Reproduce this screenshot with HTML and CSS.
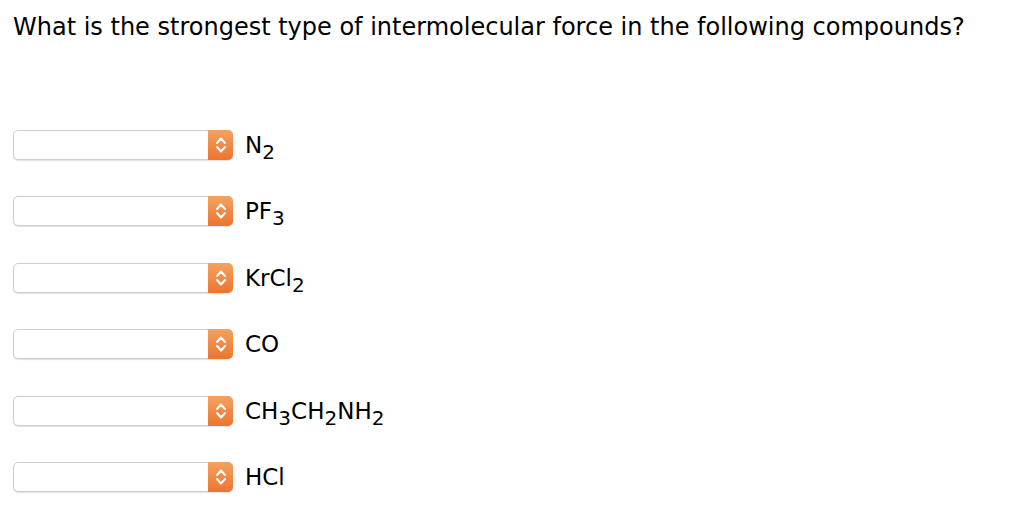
FILE: index.html
```html
<!DOCTYPE html>
<html lang="en">
<head>
    <meta charset="UTF-8">
    <title>Intermolecular Forces</title>
    <link rel="stylesheet" href="styles.css">
</head>
<body>
    <div class="question">
        <p class="prompt">What is the strongest type of intermolecular force in the following compounds?</p>

        <div class="answers">
            <div class="answer">
                <div class="dropdown"><span class="dropdown-btn"><svg viewBox="0 0 12 20"><path d="M2 8 6 3.5 10 8M2 12 6 16.5 10 12"/></svg></span></div>
                <span class="formula">N<sub>2</sub></span>
            </div>
            <div class="answer">
                <div class="dropdown"><span class="dropdown-btn"><svg viewBox="0 0 12 20"><path d="M2 8 6 3.5 10 8M2 12 6 16.5 10 12"/></svg></span></div>
                <span class="formula">PF<sub>3</sub></span>
            </div>
            <div class="answer">
                <div class="dropdown"><span class="dropdown-btn"><svg viewBox="0 0 12 20"><path d="M2 8 6 3.5 10 8M2 12 6 16.5 10 12"/></svg></span></div>
                <span class="formula">KrCl<sub>2</sub></span>
            </div>
            <div class="answer">
                <div class="dropdown"><span class="dropdown-btn"><svg viewBox="0 0 12 20"><path d="M2 8 6 3.5 10 8M2 12 6 16.5 10 12"/></svg></span></div>
                <span class="formula">CO</span>
            </div>
            <div class="answer">
                <div class="dropdown"><span class="dropdown-btn"><svg viewBox="0 0 12 20"><path d="M2 8 6 3.5 10 8M2 12 6 16.5 10 12"/></svg></span></div>
                <span class="formula">CH<sub>3</sub>CH<sub>2</sub>NH<sub>2</sub></span>
            </div>
            <div class="answer">
                <div class="dropdown"><span class="dropdown-btn"><svg viewBox="0 0 12 20"><path d="M2 8 6 3.5 10 8M2 12 6 16.5 10 12"/></svg></span></div>
                <span class="formula">HCl</span>
            </div>
        </div>
    </div>
</body>
</html>
```

FILE: styles.css
```css
body {
    margin: 0;
    background: #fff;
    font-family: "DejaVu Sans", Verdana, sans-serif;
    color: #000;
}
.question {
    padding: 12px 13px;
}
.prompt {
    margin: 0;
    font-size: 24px;
    line-height: 30px;
}
.answers {
    display: flex;
    flex-direction: column;
    gap: 36.4px;
    margin-top: 88px;
}
.answer {
    display: flex;
    align-items: center;
    gap: 12px;
    height: 30px;
}
.dropdown {
    display: flex;
    justify-content: flex-end;
    width: 218px;
    height: 28px;
    border: 1px solid #cfcfcf;
    border-radius: 5px;
    background: #fff;
    box-shadow: 0 1px 1px rgba(0,0,0,0.12);
}
.dropdown-btn {
    display: flex;
    align-items: center;
    justify-content: center;
    flex: 0 0 25px;
    margin: -1px -1px -1px 0;
    border-radius: 0 5px 5px 0;
    background: linear-gradient(#f5a25f, #ec7431);
}
.dropdown-btn svg {
    display: block;
    flex: 0 0 12px;
    width: 12px;
    height: 20px;
}
.dropdown-btn path {
    fill: none;
    stroke: #fff;
    stroke-width: 2;
    stroke-linecap: round;
    stroke-linejoin: round;
}
.formula {
    font-size: 23px;
    line-height: 30px;
}
.formula sub {
    font-size: 20px;
    vertical-align: -6px;
    line-height: 0;
}
```
